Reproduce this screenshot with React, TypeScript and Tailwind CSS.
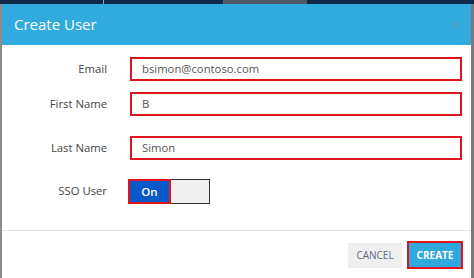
import { X } from 'lucide-react';

const font = { fontFamily: '"Open Sans", "Noto Sans", sans-serif' };

interface FieldRowProps {
  label: string;
  value: string;
  className?: string;
}

// One labelled text input, the red outline is part of the screenshot
const FieldRow = ({ label, value, className }: FieldRowProps) => (
  <div className={`flex items-center ${className ?? ''}`}>
    <div className="w-[105px] text-right text-[11.3px] text-[#444]">{label}</div>
    <div className="ml-[23px] flex-1 h-[24px] border-2 border-[#e0141e] flex items-center pl-[10px] text-[11.3px] text-[#555]">
      {value}
    </div>
  </div>
);

export default function App() {
  return (
    <div className="w-[474px] h-[278px] bg-[#0f2a48] flex flex-col overflow-hidden" style={font}>
      {/* page behind the dialog */}
      <div className="h-[4px] flex shrink-0">
        <div className="w-[103px]" />
        <div className="w-[1px] bg-[#9aa8b8]" />
        <div className="w-[119px]" />
        <div className="w-[84px] bg-[#505a66]" />
      </div>

      <div className="flex flex-1">
        <div className="w-[2px] bg-[#8c8c8c]" />

        <div className="flex-1 flex flex-col bg-white">
          <div className="h-[41px] bg-[#31abdf] flex items-center justify-between pl-[12px] pr-[9px]">
            <span className="text-[15px] text-white">Create User</span>
            <X className="w-[12px] h-[12px] text-[#5f9cc4]" strokeWidth={2.5} />
          </div>

          <div className="flex flex-col pr-[9px]">
            <FieldRow label="Email" value="bsimon@contoso.com" className="mt-[12px]" />
            <FieldRow label="First Name" value="B" className="mt-[11px]" />
            <FieldRow label="Last Name" value="Simon" className="mt-[20px]" />

            <div className="flex items-center mt-[19px]">
              <div className="w-[105px] text-right text-[11.3px] text-[#444]">SSO User</div>
              <div className="ml-[21px] flex h-[25px]">
                <div className="w-[43px] border-2 border-[#e0141e] bg-[#0a58c9] flex items-center justify-center text-[11.5px] font-semibold text-white">
                  On
                </div>
                <div className="w-[39px] border border-l-0 border-[#333] bg-[#efefef]" />
              </div>
            </div>
          </div>

          <div className="mt-[26px] h-[1px] bg-[#e6e6e6]" />

          <div className="flex justify-end items-center gap-[5px] pr-[8px] mt-[10px]">
            <div className="w-[54px] h-[25px] bg-[#efefef] flex items-center justify-center text-[10px] text-[#5b6b82]">
              CANCEL
            </div>
            <div className="w-[56px] h-[28px] bg-[#2fa9dd] border-2 border-[#e0141e] flex items-center justify-center text-[10px] font-bold text-white">
              CREATE
            </div>
          </div>
        </div>

        <div className="w-[3px] bg-[#7a7a7a]" />
      </div>
    </div>
  );
}
